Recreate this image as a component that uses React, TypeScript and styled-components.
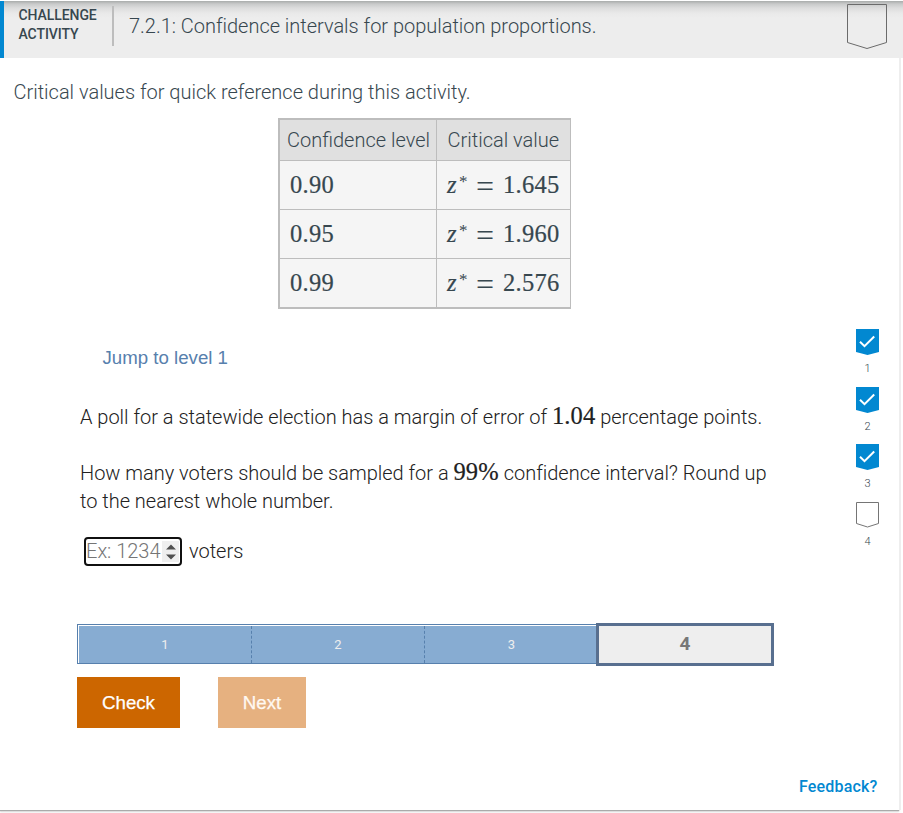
import React from 'react';
import styled, { createGlobalStyle } from 'styled-components';

const GlobalStyle = createGlobalStyle`
  * { box-sizing: border-box; }
  body { margin: 0; background: #fff; overflow: hidden; }
  button, input { font: inherit; }
`;

const Page = styled.div`
  width: 903px;
  height: 813px;
  padding-top: 1px;
  overflow: hidden;
  font: 300 20px/28px Roboto, sans-serif;
  color: #37474f;
`;

const Card = styled.main`
  width: 899px;
  height: 809px;
  display: flex;
  flex-direction: column;
  background: #fff;
  box-shadow: 2px 0 0 #eee, 0 1px 1px #aaa, 0 2px 2px #ddd;
`;

const Header = styled.header`
  width: 903px;
  height: 57px;
  flex: none;
  display: flex;
  align-items: flex-start;
  border-left: 4px solid #0288d1;
  background: linear-gradient(#a9acab 0, #c9caca 3px, #dcdcdc 7px, #e9e9e9 12px, #ededed 17px);
`;

const HeaderLabel = styled.div`
  width: 94px;
  margin: 5px 0 0 14.5px;
  margin-right: -0.5px;
  font-size: 14px;
  font-weight: 500;
  line-height: 19px;
  letter-spacing: -0.08px;
`;

const Divider = styled.div`
  width: 2px;
  height: 40px;
  margin-top: 5px;
  background: #bdbdbd;
`;

const Title = styled.h1`
  flex: 1;
  margin: 11px 0 0 15px;
  font-size: 20px;
  font-weight: 300;
  line-height: 28px;
  letter-spacing: -0.02px;
`;

const HeaderBadge = styled.svg`
  width: 42px;
  height: 48px;
  margin: 2px 15px 0 0;
`;

const Intro = styled.p`
  margin: 20px 0 12px 13.5px;
  letter-spacing: -0.01px;
`;

const ValuesTable = styled.div`
  width: 293px;
  height: 191px;
  margin-left: 278px;
  flex: none;
  display: grid;
  grid-template-columns: 156px 1fr;
  grid-template-rows: 40px repeat(3, 48px);
  gap: 1px;
  border: 2px solid #bdbdbd;
  background: #bdbdbd;
`;

const HeadCell = styled.div<{ $pad: number }>`
  padding: 6px 0 0 ${(p) => p.$pad}px;
  background: #e0e0e0;
  white-space: nowrap;
`;

const Cell = styled.div`
  display: flex;
  align-items: center;
  padding: 0 10px;
  background: #f5f5f5;
`;

const MathText = styled.span`
  font: 400 24.5px/26px "Liberation Serif", serif;
  letter-spacing: 0.3px;
  -webkit-text-stroke: 0.2px currentColor;
`;

const InlineMath = styled(MathText)`
  letter-spacing: 0.15px;
`;

const Equals = styled(MathText)`
  margin: 2px 6px 0 10px;
  font-size: 32px;
  width: 21px;
  -webkit-text-stroke: 0;
  letter-spacing: 0;
`;

const Zed = styled(MathText)`
  width: 12px;
  font-style: italic;
`;

const Star = styled(MathText)`
  width: 7px;
  font-size: 17px;
  line-height: 14px;
  align-self: flex-start;
  margin-top: 14px;
  -webkit-text-stroke: 0;
`;

const Body = styled.div`
  display: flex;
  justify-content: space-between;
  margin-top: 20px;
`;

const Exercise = styled.section`
  width: 697px;
  margin-left: 77px;
  color: #212121;
`;

const JumpButton = styled.button`
  display: block;
  margin: 14px 0 0 25.5px;
  padding: 0;
  border: 0;
  background: none;
  color: #5780ad;
  font: 400 18.67px/30px "Liberation Sans", sans-serif;
`;

const Prompt = styled.p<{ $top: number }>`
  height: 28px;
  margin: ${(p) => p.$top}px 0 0 3px;
  letter-spacing: -0.015px;
  white-space: nowrap;
`;

const AnswerRow = styled.div`
  display: flex;
  align-items: center;
  gap: 7px;
  margin: 22px 0 0 7px;
`;

const Unit = styled.span`
  margin-top: -2px;
`;

const NumberField = styled.div`
  width: 98px;
  height: 29px;
  display: flex;
  padding: 2px 2px 2px 0;
  border: 2px solid #101010;
  border-radius: 4px;
  background: #fff;
`;

const NumberInput = styled.input`
  width: 76px;
  height: 20px;
  padding: 0;
  border: 0;
  outline: 0;
  background: none;
  &::placeholder { color: #757575; opacity: 1; }
`;

const Stepper = styled.svg`
  width: 17px;
  height: 21px;
  flex: none;
  background: #efefef;
`;

const Levels = styled.div`
  display: flex;
  align-items: flex-start;
  height: 43px;
  margin-top: 57px;
`;

const DoneLevels = styled.div`
  width: 519px;
  height: 40px;
  margin-top: 1px;
  display: grid;
  grid-template-columns: 173px 173px 1fr;
  padding: 1px 0 0 1px;
  border: 1px solid #5780ad;
  border-right: 0;
  background: #fff;
`;

const Level = styled.div<{ $last: boolean }>`
  border-right: ${(p) => (p.$last ? '0' : '1px dashed #5780ad')};
  background: #87acd2;
  color: #eee;
  font: 400 13px/37px Roboto, sans-serif;
  text-align: center;
  text-indent: ${(p) => (p.$last ? '2px' : '0')};
`;

const ActiveLevel = styled.div`
  width: 178px;
  height: 43px;
  border: 3px solid #586f8f;
  background: #eee;
  color: #777;
  font: 700 19px/35px Roboto, sans-serif;
  text-align: center;
`;

const Actions = styled.div`
  display: flex;
  gap: 38px;
  margin-top: 11px;
`;

const ActionButton = styled.button<{ $width: number; $faded?: boolean }>`
  width: ${(p) => p.$width}px;
  height: 51px;
  padding: 0;
  border: 0;
  background: ${(p) => (p.$faded ? '#e6b180' : '#cc6600')};
  color: ${(p) => (p.$faded ? '#fff9f2' : '#fff')};
  font: 400 18.67px/51px "Liberation Sans", sans-serif;
  -webkit-text-stroke: 0.25px currentColor;
`;

const Progress = styled.aside`
  width: 25px;
  margin-right: 19px;
`;

const Step = styled.div`
  height: 57.5px;
  font-size: 11px;
  font-weight: 300;
  line-height: 14px;
  text-align: center;
`;

const StepIcon = styled.svg`
  display: block;
  width: 25px;
  height: 27px;
  margin-bottom: 6px;
`;

const Feedback = styled.a`
  align-self: flex-end;
  margin: 45px 21.5px 0 0;
  color: #0288d1;
  font-size: 16px;
  font-weight: 500;
  line-height: 28px;
  letter-spacing: 0.18px;
`;

const ROWS = [
  { level: '0.90', value: '1.645' },
  { level: '0.95', value: '1.960' },
  { level: '0.99', value: '2.576' },
];

const STEPS = [
  { id: 1, done: true },
  { id: 2, done: true },
  { id: 3, done: true },
  { id: 4, done: false },
];

const StepBadge = ({ done }: { done: boolean }) => (
  <StepIcon viewBox="0 0 25 27">
    {done ? (
      <>
        <path d="M1 0H24V23L12.5 26L1 23Z" fill="#0288d1" />
        <path d="M5 12.7L9.5 17.2L19.2 7.5" fill="none" stroke="#fff" strokeWidth="2" />
      </>
    ) : (
      <path d="M1.5 .5H23.5V21.5L12.5 25L1.5 21.5Z" fill="#fff" stroke="#757575" />
    )}
  </StepIcon>
);

export default function App() {
  return (
    <Page>
      <GlobalStyle />
      <Card>
        <Header>
          <HeaderLabel>CHALLENGE ACTIVITY</HeaderLabel>
          <Divider />
          <Title>7.2.1: Confidence intervals for population proportions.</Title>
          <HeaderBadge viewBox="0 0 42 48">
            <path d="M1.5 1.5H40.5V39.5L21 45.5L1.5 39.5Z" fill="none" stroke="#6b6b6b" />
          </HeaderBadge>
        </Header>
        <Intro>Critical values for quick reference during this activity.</Intro>
        <ValuesTable>
          <HeadCell $pad={7}>Confidence level</HeadCell>
          <HeadCell $pad={10.5}>Critical value</HeadCell>
          {ROWS.map((row) => (
            <React.Fragment key={row.level}>
              <Cell><MathText>{row.level}</MathText></Cell>
              <Cell>
                <Zed>z</Zed>
                <Star>*</Star>
                <Equals>=</Equals>
                <MathText>{row.value}</MathText>
              </Cell>
            </React.Fragment>
          ))}
        </ValuesTable>
        <Body>
          <Exercise>
            <JumpButton>Jump to level 1</JumpButton>
            <Prompt $top={30}>
              A poll for a statewide election has a margin of error of <InlineMath>1.04</InlineMath> percentage points.
            </Prompt>
            <Prompt $top={28}>
              How many voters should be sampled for a <InlineMath>99%</InlineMath> confidence interval? Round up
            </Prompt>
            <Prompt $top={0}>to the nearest whole number.</Prompt>
            <AnswerRow>
              <NumberField>
                <NumberInput placeholder="Ex: 1234" />
                <Stepper viewBox="0 0 17 21">
                  <path d="M4 8.5L9 3.5L14 8.5Z M4 13.5H14L9 18.5Z" fill="#505050" />
                </Stepper>
              </NumberField>
              <Unit>voters</Unit>
            </AnswerRow>
            <Levels>
              <DoneLevels>
                {[1, 2, 3].map((n) => (
                  <Level key={n} $last={n === 3}>{n}</Level>
                ))}
              </DoneLevels>
              <ActiveLevel>4</ActiveLevel>
            </Levels>
            <Actions>
              <ActionButton $width={103}>Check</ActionButton>
              <ActionButton $width={88} $faded>Next</ActionButton>
            </Actions>
          </Exercise>
          <Progress>
            {STEPS.map((s) => (
              <Step key={s.id}>
                <StepBadge done={s.done} />
                {s.id}
              </Step>
            ))}
          </Progress>
        </Body>
        <Feedback>Feedback?</Feedback>
      </Card>
    </Page>
  );
}
